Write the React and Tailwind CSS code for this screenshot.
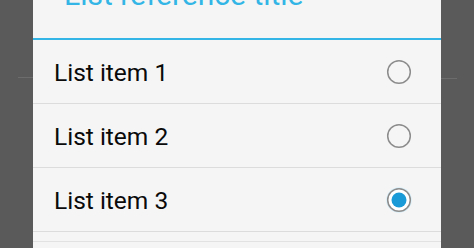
import React from "react";

const items = [
  { label: "List item 1", checked: false },
  { label: "List item 2", checked: false },
  { label: "List item 3", checked: true },
];

function Radio({ checked }) {
  return (
    <svg width="26" height="26" viewBox="0 0 26 26">
      {checked && <circle cx="13" cy="13" r="12.8" fill="#d6eef8" />}
      <circle cx="13" cy="13" r="11.3" fill={checked ? "#ffffff" : "none"} stroke="#8c8c8c" strokeWidth="1.5" />
      {checked && <circle cx="13" cy="13" r="7.5" fill="#1a9ad6" />}
    </svg>
  );
}

export default function App() {
  return (
    <div
      className="flex h-[248px] w-[474px] overflow-hidden bg-[#5a5a5a]"
      style={{ fontFamily: "Roboto, 'Noto Sans', sans-serif" }}
    >
      {/* page behind the dialog */}
      <div className="flex w-[33px] flex-col pt-[77px]">
        <div className="ml-[18px] h-px bg-[#6c6c6c]" />
      </div>

      {/* dialog */}
      <div className="flex w-[408px] flex-col bg-[#f5f5f5]">
        <div className="h-[38px] overflow-hidden">
          <div className="mt-[-22px] pl-[31px] text-[30px] leading-[34px] text-[#33b5e5]">
            List reference title
          </div>
        </div>
        <div className="h-[2px] bg-[#33b5e5]" />

        {items.map((item) => (
          <div
            key={item.label}
            className="flex h-[64px] items-center justify-between border-b border-[#dcdcdc] pr-[29px] pl-[21px]"
          >
            <span className="pt-[3px] text-[24.5px] leading-[28px] text-[#0a0a0a]">{item.label}</span>
            <Radio checked={item.checked} />
          </div>
        ))}

        <div className="mt-[9px] border-t border-[#e2e2e2]" />
      </div>

      <div className="flex flex-1 flex-col pt-[78px]">
        <div className="mr-[17px] h-px bg-[#6c6c6c]" />
      </div>
    </div>
  );
}
